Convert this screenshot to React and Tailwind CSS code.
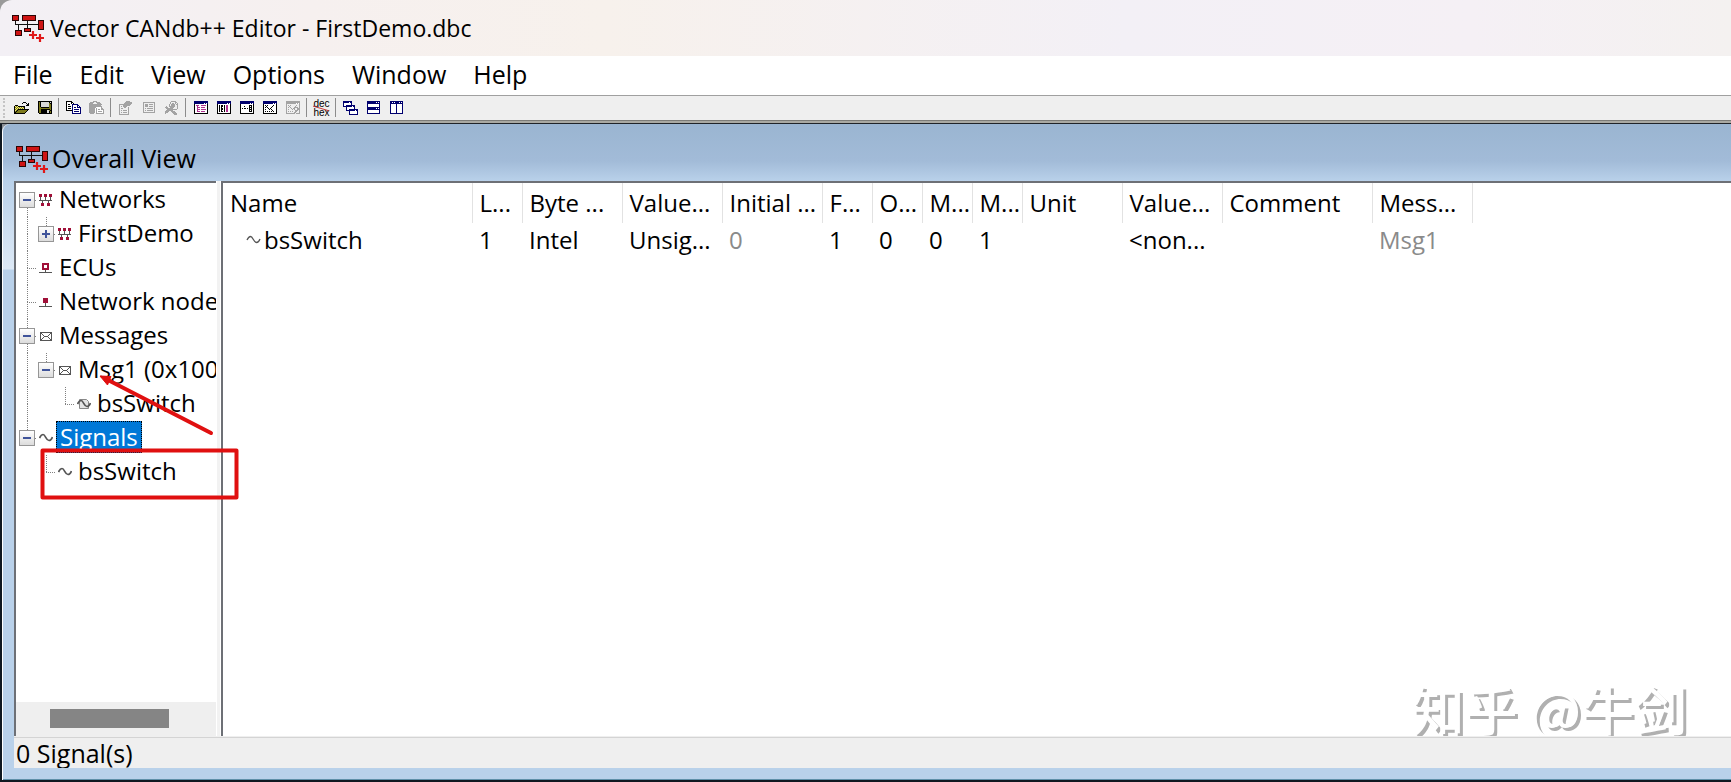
const PALETTE = {
  k: "#000000",
  w: "#ffffff",
  g: "#a3a3a3",
  n: "#00006e",
  o: "#7d7a1c",
  y: "#f0ec70",
  m: "#b03090",
  r: "#a01038",
  d: "#555555",
  s: "#d8d8d8",
};

function Pixels({ rows }) {
  const width = Math.max(...rows.map((r) => r.length));
  const rects = [];
  rows.forEach((row, y) => {
    let x = 0;
    while (x < row.length) {
      const c = row[x];
      let end = x + 1;
      while (end < row.length && row[end] === c) end += 1;
      if (PALETTE[c]) {
        rects.push(
          <rect key={`${x}-${y}`} x={x} y={y} width={end - x} height={1} fill={PALETTE[c]} />
        );
      }
      x = end;
    }
  });
  return (
    <svg
      aria-hidden="true"
      className="shrink-0"
      width={width}
      height={rows.length}
      viewBox={`0 0 ${width} ${rows.length}`}
      shapeRendering="crispEdges"
    >
      {rects}
    </svg>
  );
}

const ICONS = {
  open: [
    ".........kkk....",
    "........k...k.k.",
    ".............kk.",
    ".kkk........kkk.",
    "kyoykkkkkkk.....",
    "koyoyoyoyok.....",
    "kyoyoyoyoyk.....",
    "koyokkkkkkkkkkk.",
    "kyokoooooooook..",
    "kokoooooooook...",
    "kkoooooooook....",
    "kkkkkkkkkkk.....",
  ],
  save: [
    "kkkkkkkkkkkkkk",
    "kokssssssssksk",
    "kokssssssssokk",
    "kokssssssssook",
    "kokssssssssook",
    "kokssssssssook",
    "kookkkkkkkkook",
    "kooooooooooook",
    "kookkkkkkkkkok",
    "kookkkkkkssokk",
    "kookkkkkksskok",
    "kookkkkkksskok",
    ".kkkkkkkkkkkkk",
  ],
  copy: [
    "kkkkkk.........",
    "kwwwwkk........",
    "kwwwwkwk.......",
    "kwkkwwnnnnnn...",
    "kwwwwwnwwwwnn..",
    "kwkkkwnwwwwnwn.",
    "kwwwwwnwnnwnnnn",
    "kwkkkwnwwwwwwwn",
    "kwwwwwnwnnnnnwn",
    "kkkkkknwwwwwwwn",
    "......nwnnnnnwn",
    "......nwwwwwwwn",
    "......nnnnnnnnn",
  ],
  paste: [
    "....gggg.......",
    ".gggg..gggg....",
    "gggg....gggg...",
    "ggggggggggggg..",
    "gggggggggggg...",
    "ggggggggggggg..",
    "gggggggwwwwwg..",
    "ggggggwgwwwwgg.",
    "ggggggwgwggwggg",
    "ggggggwgwwwwwwg",
    "ggggggwgwggggwg",
    "ggggggwgwwwwwwg",
    ".gggg..gggggggg",
  ],
  properties: [
    ".......gggg...",
    "......ggggggg.",
    ".....gggggggg.",
    "gggggggggggg..",
    "g...ggggggg...",
    "g.g.gggg......",
    "g....gg..g....",
    "g.gg.....g....",
    "g........g....",
    "g.g.ggggwg....",
    "g........g....",
    "g.g.gggg.g....",
    "g........g....",
    "gggggggggg....",
  ],
  details: [
    "gggggggggggg",
    "g..........g",
    "g.ggg.gggg.g",
    "g.ggg......g",
    "g.ggg.gggg.g",
    "g..........g",
    "g.g.gggggg.g",
    "g..........g",
    "g.g.gggggg.g",
    "g..........g",
    "gggggggggggg",
  ],
  find: [
    "......ggggg...",
    ".....g....gg..",
    ".....g.gg.g.g.",
    "....g.gggg.gg.",
    "....g.gggg..g.",
    ".g..gggggg..g.",
    "ggg..gggg...g.",
    ".ggggggg....g.",
    "..gggggggggg..",
    ".ggggggg......",
    "gggg..gggg....",
    "ggg....gggg...",
    "g.......gggg..",
    ".........ggg..",
  ],
  tree: [
    "nnnnnnnnnnnnnn",
    "nnnnnnnnnnnnnn",
    "nnnnnnnnnnwnwn",
    "kwwwwwwwwwwwwk",
    "kwmmmwwmmmmmwk",
    "kwwmwwwwwwwwwk",
    "kwwmmmwmmmmwwk",
    "kwwmwwwwwwwwwk",
    "kwwmmmwmmmmmwk",
    "kwwmwwwwwwwwwk",
    "kwwmmmwmmmmwwk",
    "kwwwwwwwwwwwwk",
    "kkkkkkkkkkkkkk",
  ],
  columns: [
    "nnnnnnnnnnnnnn",
    "nnnnnnnnnnnnnn",
    "nnnnnnnnnnwnwn",
    "kwwwwwwwwwwwwk",
    "kwkwkkwkwmmwwk",
    "kwkwkkwkwmmwwk",
    "kwkwkwwkwmmwwk",
    "kwkwkkwkwmmwwk",
    "kwkwkkwkwmmwwk",
    "kwkwkwwkwmmwwk",
    "kwkwkkwkwmmwwk",
    "kwwwwwwwwwwwwk",
    "kkkkkkkkkkkkkk",
  ],
  relation: [
    "nnnnnnnnnnnnnn",
    "nnnnnnnnnnnnnn",
    "nnnnnnnnnnwnwn",
    "kwwwwwwwwwwwwk",
    "kwwwwwwwwkkkwk",
    "kwwwkwwwwkwkwk",
    "kwwwwwwwwkkkwk",
    "kwkwkkwkwkwkwk",
    "kwwwwwwwwkkkwk",
    "kwwwwwwwwkwkwk",
    "kwwwwwwwwkkkwk",
    "kwwwwwwwwwwwwk",
    "kkkkkkkkkkkkkk",
  ],
  graph: [
    "nnnnnnnnnnnnnn",
    "nnnnnnnnnnnnnn",
    "nnnnnnnnnnwnwn",
    "kwwwwwwwwwwwwk",
    "kwkwkwwwwwkwwk",
    "kwwkwwwwwkwwwk",
    "kwkwkwwwkwwwwk",
    "kwwwwkwkwwwwwk",
    "kwkwwwkwkwwwwk",
    "kwwwwwwwwkwwwk",
    "kwkwkwkwkwkwwk",
    "kwwwwwwwwwwwwk",
    "kkkkkkkkkkkkkk",
  ],
  graphOff: [
    "gggggggggggggg",
    "gggggggggggggg",
    "ggggggggggwgwg",
    "g............g",
    "g.g.g.....g..g",
    "g..g.....g...g",
    "g.g.g...gggg.g",
    "g....g.gg..ggg",
    "g.g...g.g..ggg",
    "g........ggg.g",
    "g.g.g.g..gg..g",
    "g.......gg...g",
    "ggggggggg.gggg",
  ],
  cascade: [
    "nnnnnnnnn......",
    "nnnnnnwnn......",
    "nwwwwwwwn......",
    "nwwwwwwwn......",
    "nwwnnnnnnnnn...",
    "nnnnnnnnnwnn...",
    "...nwwwwwwwn...",
    "...nwwwwwwwn...",
    "...nwwnnnnnnnnn",
    "...nnnnnnnnnwnn",
    "......nwwwwwwwn",
    "......nwwwwwwwn",
    "......nwwwwwwwn",
    "......nnnnnnnnn",
  ],
  tileH: [
    "nnnnnnnnnnnnn",
    "nnnnnnnnnwnwn",
    "nnnnnnnnnnnnn",
    "nwwwwwwwwwwwn",
    "nwwwwwwwwwwwn",
    "nwwwwwwwwwwwn",
    "nnnnnnnnnnnnn",
    "nnnnnnnnnwnwn",
    "nnnnnnnnnnnnn",
    "nwwwwwwwwwwwn",
    "nwwwwwwwwwwwn",
    "nwwwwwwwwwwwn",
    "nnnnnnnnnnnnn",
  ],
  tileV: [
    "nnnnnnnnnnnnn",
    "nnwnwnnnnwnwn",
    "nnnnnnnnnnnnn",
    "nwwwwwnwwwwwn",
    "nwwwwwnwwwwwn",
    "nwwwwwnwwwwwn",
    "nwwwwwnwwwwwn",
    "nwwwwwnwwwwwn",
    "nwwwwwnwwwwwn",
    "nwwwwwnwwwwwn",
    "nwwwwwnwwwwwn",
    "nwwwwwnwwwwwn",
    "nnnnnnnnnnnnn",
  ],
  network: [
    "rrr..rrr..rrr",
    "rrr..rrr..rrr",
    "rrr..rrr..rrr",
    ".d....d....d.",
    ".d....d....d.",
    ".d....d....d.",
    "ddddddddddddd",
    "...d.....d...",
    "...d.....d...",
    "..rrr...rrr..",
    "..rrr...rrr..",
    "..rrr...rrr..",
  ],
  ecu: [
    "...rrrrrrr...",
    "...rrrrrrr...",
    "...rrwwwrr...",
    "...rrwwwrr...",
    "...rrwwwrr...",
    "...rrrrrrr...",
    "...rrrrrrr...",
    "......d......",
    "......d......",
    "ddddddddddddd",
  ],
  node: [
    "....rrrrr....",
    "....rrrrr....",
    "....rrrrr....",
    "....rrrrr....",
    "....rrrrr....",
    "......d......",
    "......d......",
    "......d......",
    "ddddddddddddd",
  ],
  message: [
    "dddddddddddd",
    "ddwwwwwwwwdd",
    "dwdwwwwwwdwd",
    "dwwdwwwwdwwd",
    "dwwwddddwwwd",
    "dwwdwwwwdwwd",
    "dwdwwwwwwdwd",
    "ddwwwwwwwwdd",
    "dddddddddddd",
  ],
};

function Wave({ boxed = false, small = false }) {
  return (
    <svg aria-hidden="true" className="shrink-0" width={small ? 15 : 14} height="12" viewBox="0 0 14 12" fill="none">
      {boxed && (
        <path d="M2.5 1.5h7l2 2v7h-9z" fill="#e4e4e4" stroke="#888" strokeWidth="1" />
      )}
      <path
        d="M0.500 6C1.500 4 2.500 2.500 4 2.500C6.500 2.500 7 8.500 10 8.500C11.200 8.500 12.500 7.500 13.500 5"
        stroke="#555"
        strokeWidth={small ? 1.3 : 1.7}
      />
    </svg>
  );
}

function Logo() {
  return (
    <svg aria-hidden="true" className="shrink-0" width="32" height="28" viewBox="0 0 32 28">
      <g fill="none" stroke="#111" strokeWidth="1" shapeRendering="crispEdges">
        <path d="M3.500 6v5M15.500 6v8M3.500 10.500h23M6.500 11v5" />
      </g>
      <g fill="#cf1414" stroke="#2a0505" strokeWidth="1" shapeRendering="crispEdges">
        <rect x="0.500" y="1.500" width="6" height="5" />
        <rect x="10.500" y="1.500" width="13" height="5" />
        <rect x="26.500" y="6.500" width="5" height="9" />
        <rect x="3.500" y="16.500" width="6" height="5" />
        <rect x="12.500" y="14.500" width="6" height="3" />
      </g>
      <path d="M17 21h8M21 17v8M24 24h8M28 20v8" stroke="#e01818" strokeWidth="2.200" fill="none" />
    </svg>
  );
}

const MENUS = ["File", "Edit", "View", "Options", "Window", "Help"];

const TOOLBAR = [
  [
    { icon: "open", label: "Open" },
    { icon: "save", label: "Save" },
  ],
  [
    { icon: "copy", label: "Copy" },
    { icon: "paste", label: "Paste", disabled: true },
  ],
  [
    { icon: "properties", label: "Properties", disabled: true },
    { icon: "details", label: "Details", disabled: true },
    { icon: "find", label: "Find", disabled: true },
  ],
  [
    { icon: "tree", label: "Overall view" },
    { icon: "columns", label: "List view" },
    { icon: "relation", label: "Relations" },
    { icon: "graph", label: "Matrix view" },
    { icon: "graphOff", label: "Refresh matrix", disabled: true },
  ],
  [{ icon: "dechex", label: "Decimal or hexadecimal" }],
  [
    { icon: "cascade", label: "Cascade" },
    { icon: "tileH", label: "Tile horizontally" },
    { icon: "tileV", label: "Tile vertically" },
  ],
];

function DecHex() {
  return (
    <span className="relative flex flex-col items-center font-['Liberation_Sans',sans-serif] text-[10px] leading-[9px] text-black">
      <span>dec</span>
      <span>hex</span>
      <svg aria-hidden="true" className="absolute inset-0 h-full w-full" viewBox="0 0 17 18" fill="none">
        <path d="M0 7L17 12" stroke="#c03030" strokeWidth="1" />
      </svg>
    </span>
  );
}

function Toolbar() {
  return (
    <div role="toolbar" aria-label="Main toolbar" className="flex h-6 shrink-0 items-center bg-[#efefef] pb-px">
      <span className="ml-[3px] mr-[5px] h-5 border-l-2 border-dotted border-[#c4c4c4]" />
      {TOOLBAR.map((group, i) => (
        <div key={i} className="flex items-center">
          {i > 0 && <span className="ml-0.5 mr-[3px] h-[19px] w-px bg-[#8c8c8c]" />}
          {group.map(({ icon, label, disabled }) => (
            <button
              key={icon}
              type="button"
              aria-label={label}
              disabled={disabled}
              className="flex h-[22px] w-[23px] items-center justify-center"
            >
              {icon === "dechex" ? <DecHex /> : <Pixels rows={ICONS[icon]} />}
            </button>
          ))}
        </div>
      ))}
    </div>
  );
}

/* guides: one entry for each ancestor level, left of the row's own connector */
const TREE = [
  { label: "Networks", icon: "network", guides: [], box: "-", up: false, down: true },
  { label: "FirstDemo", icon: "network", guides: ["line"], box: "+", up: true, down: false },
  { label: "ECUs", icon: "ecu", guides: [], up: true, down: true },
  { label: "Network nodes", icon: "node", guides: [], up: true, down: true },
  { label: "Messages", icon: "message", guides: [], box: "-", up: true, down: true },
  { label: "Msg1 (0x100)", icon: "message", guides: ["line"], box: "-", up: true, down: false },
  { label: "bsSwitch", icon: "boxedWave", guides: ["line", "blank"], up: true, down: false },
  { label: "Signals", icon: "wave", guides: [], box: "-", up: true, down: false, selected: true },
  { label: "bsSwitch", icon: "wave", guides: ["blank"], up: true, down: false },
];

function Guide({ up, down, across }) {
  return (
    <svg
      aria-hidden="true"
      className="h-[34px] w-[19px] shrink-0"
      viewBox="0 0 19 34"
      fill="none"
      stroke="#808080"
      strokeDasharray="1 1"
      shapeRendering="crispEdges"
    >
      {up && <path d="M10.500 0V17" />}
      {down && <path d="M10.500 17V34" />}
      {across && <path d="M10 17.500H20" />}
    </svg>
  );
}

function TreeIcon({ icon }) {
  if (icon === "wave") return <Wave />;
  if (icon === "boxedWave") return <Wave boxed />;
  return <Pixels rows={ICONS[icon]} />;
}

function TreeRow({ row }) {
  return (
    <li role="treeitem" aria-selected={!!row.selected} className="flex h-[34px] items-center pl-px">
      {row.guides.map((g, i) => (
        <Guide key={i} up={g === "line"} down={g === "line"} />
      ))}
      <span className="relative flex shrink-0 items-center justify-center">
        <Guide up={row.up} down={row.down} across />
        {row.box && (
          <button
            type="button"
            aria-label={row.box === "-" ? "Collapse" : "Expand"}
            className="absolute flex h-4 w-4 items-center justify-center border border-[#969696] bg-linear-to-b from-white to-[#dcdcdc]"
          >
            <svg aria-hidden="true" width="8" height="8" viewBox="0 0 8 8" stroke="#40549a" strokeWidth="2">
              <path d={row.box === "-" ? "M0 4h8" : "M0 4h8M4 0v8"} />
            </svg>
          </button>
        )}
      </span>
      <span className="flex w-[19px] shrink-0 justify-center">
        <TreeIcon icon={row.icon} />
      </span>
      <span
        className={
          row.selected
            ? "mb-0.5 ml-px border border-dotted border-black bg-[#0078d7] px-[3px] leading-[30px] whitespace-nowrap text-white"
            : "mb-0.5 ml-px px-[3px] leading-8 whitespace-nowrap"
        }
      >
        {row.label}
      </span>
    </li>
  );
}

const COLUMNS = [
  { head: "Name", cell: "bsSwitch", col: "w-[249px]" },
  { head: "L...", cell: "1", col: "w-[50px]" },
  { head: "Byte ...", cell: "Intel", col: "w-[100px]" },
  { head: "Value...", cell: "Unsig...", col: "w-[100px]" },
  { head: "Initial ...", cell: "0", col: "w-[100px]", dim: true },
  { head: "F...", cell: "1", col: "w-[50px]" },
  { head: "O...", cell: "0", col: "w-[50px]" },
  { head: "M...", cell: "0", col: "w-[50px]" },
  { head: "M...", cell: "1", col: "w-[50px]" },
  { head: "Unit", cell: "", col: "w-[100px]" },
  { head: "Value...", cell: "<non...", col: "w-[100px]" },
  { head: "Comment", cell: "", col: "w-[150px]" },
  { head: "Mess...", cell: "Msg1", col: "w-[100px]", dim: true },
];

function SignalTable() {
  return (
    <table className="w-[1249px] table-fixed border-collapse">
      <colgroup>
        {COLUMNS.map((c, i) => (
          <col key={i} className={c.col} />
        ))}
      </colgroup>
      <thead>
        <tr className="h-10">
          {COLUMNS.map((c, i) => (
            <th
              key={i}
              scope="col"
              className="overflow-hidden border-r border-[#e2e2e2] p-0 pl-[7px] text-left font-normal whitespace-nowrap"
            >
              {c.head}
            </th>
          ))}
        </tr>
      </thead>
      <tbody>
        <tr className="h-[34px]">
          {COLUMNS.map((c, i) => (
            <td
              key={i}
              className={`overflow-hidden p-0 pl-[7px] whitespace-nowrap ${c.dim ? "text-[#8a8a8a]" : ""}`}
            >
              {i === 0 ? (
                <span className="flex items-center pl-4">
                  <Wave small />
                  <span className="pl-[3px]">{c.cell}</span>
                </span>
              ) : (
                c.cell
              )}
            </td>
          ))}
        </tr>
      </tbody>
    </table>
  );
}

function Annotation() {
  return (
    <svg
      aria-hidden="true"
      className="pointer-events-none absolute top-[191px] left-[26px] z-10"
      width="202"
      height="132"
      viewBox="0 0 202 132"
      fill="none"
      stroke="#e01010"
    >
      <rect x="2.500" y="78.500" width="194" height="47" strokeWidth="4" strokeLinejoin="round" />
      <path d="M68 8L171 61" strokeWidth="4" strokeLinecap="round" />
      <path d="M60 4L71 4.500L67.500 13Z" fill="#e01010" strokeWidth="1" strokeLinejoin="round" />
    </svg>
  );
}

function OverallView() {
  return (
    <section
      aria-label="Overall View"
      className="flex min-h-0 grow flex-col rounded-tl-lg border-l border-white bg-[#b9d1ea]"
    >
      <header className="flex h-[57px] shrink-0 items-center rounded-tl-lg bg-linear-to-b from-[#9ab5d1] via-[#a2bbd8] via-65% to-[#b9d1ea] pt-3 pl-[13px]">
        <Logo />
        <h2 className="pl-1 text-[25px]">Overall View</h2>
      </header>
      <div className="flex min-h-0 grow bg-[linear-gradient(#b9d1ea,#dde9f6_88px,#b9d1ea_89px)] pl-[11px]">
        <div className="relative flex min-w-0 grow flex-col bg-[#efefef]">
          <Annotation />
          <div className="flex min-h-0 grow">
            <nav
              aria-label="Database objects"
              className="flex w-[202px] shrink-0 flex-col border-t-2 border-l-2 border-[#6d7076] bg-white"
            >
              <ul role="tree" className="min-h-0 grow overflow-hidden">
                {TREE.map((row, i) => (
                  <TreeRow key={i} row={row} />
                ))}
              </ul>
              <div className="h-[34px] shrink-0 bg-[#efefef] pt-[7px] pl-[34px]">
                <div className="h-[19px] w-[119px] bg-[#858585]" />
              </div>
            </nav>
            <div className="w-[5px] shrink-0 border-x border-white bg-[#f2f2f2]" />
            <main className="relative min-w-0 grow overflow-hidden border-t-2 border-l-2 border-[#6d7076] bg-white">
              <SignalTable />
              <p className="absolute right-11 bottom-[-3px] font-['Noto_Sans_CJK_SC',sans-serif] text-[53px] leading-[62px] font-medium whitespace-nowrap text-white [text-shadow:3px_3px_0_#b0b0b0]">
                知乎 @牛剑
              </p>
            </main>
          </div>
          <footer className="mt-px flex h-[31px] shrink-0 items-center overflow-hidden border-t border-[#d4d4d4] pt-0.5 pl-0.5 text-[25px]">
            0 Signal(s)
          </footer>
        </div>
      </div>
      <div className="h-3 shrink-0 border-b border-[#5f8fa8]" />
    </section>
  );
}

export default function App() {
  return (
    <div className="flex h-screen flex-col overflow-hidden bg-[#efefef] font-['Open_Sans','Noto_Sans',sans-serif] text-2xl text-black">
      <header className="bg-[#9a9a9a]">
        <div className="flex h-14 items-center rounded-tl-xl bg-[linear-gradient(90deg,#f3f0f5,#f6f0ef_18%,#f7f1ec_35%,#f3f0f6_65%,#f5f0f5_85%,#f4f1f0)] pl-3">
          <Logo />
          <h1 className="pl-1.5 text-[23px]">Vector CANdb++ Editor - FirstDemo.dbc</h1>
        </div>
      </header>
      <nav aria-label="Menu bar" className="flex h-[39px] shrink-0 items-center gap-[27px] bg-white pb-0.5 pl-[13px] text-[25px]">
        {MENUS.map((m) => (
          <button key={m} type="button">
            {m}
          </button>
        ))}
      </nav>
      <div className="h-px shrink-0 bg-[#a0a0a0]" />
      <Toolbar />
      <div className="h-1 shrink-0 border-y border-t-[#7c7c78] border-b-[#202428] bg-[#a9a9a2]" />
      <div className="flex min-h-0 grow border-b-2 border-l-2 border-[#101820] bg-[#8a8f94]">
        <OverallView />
      </div>
    </div>
  );
}
